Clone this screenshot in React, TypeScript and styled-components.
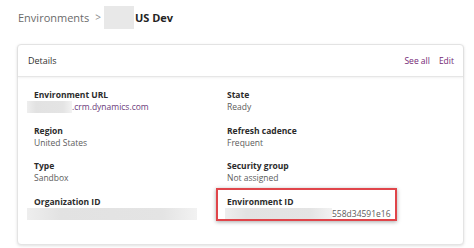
import React from 'react';
import styled, { createGlobalStyle } from 'styled-components';

const GlobalStyle = createGlobalStyle`
    html, body {
        margin: 0;
        padding: 0;
        background: #ffffff;
        font-family: "Open Sans", "Noto Sans", sans-serif;
    }
`;

const Page = styled.div`
    width: 474px;
    height: 248px;
    overflow: hidden;
    box-sizing: border-box;
    padding: 0 10px 0 17px;
`;

const Breadcrumb = styled.div`
    display: flex;
    align-items: center;
    height: 34px;
    padding-left: 1px;
    font-size: 11px;
    color: #6b6b6b;
`;

const Chevron = styled.span`
    font-size: 10px;
    color: #8a8a8a;
    margin: 0 3px 0 6px;
`;

const Redacted = styled.span<{ w: number; h: number }>`
    display: inline-block;
    width: ${(p) => p.w}px;
    height: ${(p) => p.h}px;
    background: #e8e8e8;
`;

const Current = styled.span`
    font-weight: 700;
    font-size: 11px;
    color: #242424;
    margin-left: 1px;
`;

const Card = styled.section`
    margin-top: 10px;
    width: 447px;
    height: 201px;
    box-sizing: border-box;
    border: 1px solid #e4e4e4;
    border-radius: 4px;
    box-shadow: 0 1px 3px rgba(0, 0, 0, 0.12);
    background: #ffffff;
`;

const CardHeader = styled.div`
    display: flex;
    align-items: center;
    justify-content: space-between;
    height: 31px;
    padding: 0 9px 0 10px;
    border-bottom: 1px solid #e6e6e6;
    box-shadow: 0 1px 2px rgba(0, 0, 0, 0.06);
    font-size: 9px;
    color: #323130;
`;

const Actions = styled.div`
    display: flex;
    gap: 9px;
`;

const Action = styled.span`
    color: #742774;
    font-size: 8.5px;
`;

const Grid = styled.div`
    display: grid;
    grid-template-columns: 193px 1fr;
    grid-auto-rows: 35.5px;
    padding: 12px 0 0 16px;
`;

const Field = styled.div<{ highlighted?: boolean }>`
    position: relative;
    display: flex;
    flex-direction: column;
    font-size: 8.5px;
    line-height: 12px;

    &::after {
        content: '';
        display: ${(p) => (p.highlighted ? 'block' : 'none')};
        position: absolute;
        left: -11px;
        top: -8px;
        width: 181px;
        height: 33px;
        box-sizing: border-box;
        border: 2px solid #e0454a;
        box-shadow: 0 1px 4px rgba(0, 0, 0, 0.35);
    }
`;

const Label = styled.span`
    font-weight: 700;
    color: #2b2b2b;
`;

const Value = styled.span<{ link?: boolean }>`
    display: flex;
    align-items: center;
    color: ${(p) => (p.link ? '#6b3a7a' : '#5c5c5c')};
`;

const Blur = styled.span<{ w: number; shift: number }>`
    display: inline-block;
    width: ${(p) => p.w}px;
    height: 12px;
    margin-left: -${(p) => p.shift}px;
    background: linear-gradient(90deg, #eeeeee 0%, #e2e2e2 20%, #e4e4e4 80%, #f2f2f2 100%);
`;

export default function App() {
    return (
        <>
            <GlobalStyle />
            <Page>
                <Breadcrumb>
                    <span>Environments</span>
                    <Chevron>&gt;</Chevron>
                    <Redacted w={30} h={23} />
                    <Current>US Dev</Current>
                </Breadcrumb>
                <Card>
                    <CardHeader>
                        <span>Details</span>
                        <Actions>
                            <Action>See all</Action>
                            <Action>Edit</Action>
                        </Actions>
                    </CardHeader>
                    <Grid>
                        <Field>
                            <Label>Environment URL</Label>
                            <Value link>
                                <Blur w={45} shift={7} />
                                .crm.dynamics.com
                            </Value>
                        </Field>
                        <Field>
                            <Label>State</Label>
                            <Value>Ready</Value>
                        </Field>
                        <Field>
                            <Label>Region</Label>
                            <Value>United States</Value>
                        </Field>
                        <Field>
                            <Label>Refresh cadence</Label>
                            <Value>Frequent</Value>
                        </Field>
                        <Field>
                            <Label>Type</Label>
                            <Value>Sandbox</Value>
                        </Field>
                        <Field>
                            <Label>Security group</Label>
                            <Value>Not assigned</Value>
                        </Field>
                        <Field>
                            <Label>Organization ID</Label>
                            <Value>
                                <Blur w={170} shift={7} />
                            </Value>
                        </Field>
                        <Field highlighted>
                            <Label>Environment ID</Label>
                            <Value>
                                <Blur w={107} shift={2} />
                                558d34591e16
                            </Value>
                        </Field>
                    </Grid>
                </Card>
            </Page>
        </>
    );
}
